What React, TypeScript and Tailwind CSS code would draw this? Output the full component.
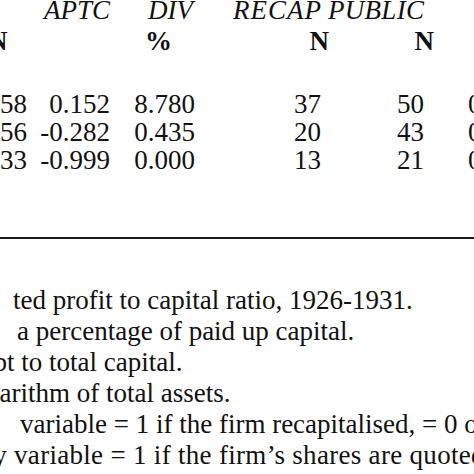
import React from 'react'

const rows = [
  { a: '58', aptc: '0.152', div: '8.780', recap: '37', pub: '50', last: '0.412' },
  { a: '56', aptc: '-0.282', div: '0.435', recap: '20', pub: '43', last: '0.271' },
  { a: '33', aptc: '-0.999', div: '0.000', recap: '13', pub: '21', last: '0.000' },
]

export default function App() {
  return (
    <div
      className="w-[474px] h-[474px] overflow-hidden bg-white text-[#111] text-[27px]"
      style={{ fontFamily: '"Liberation Serif", "Times New Roman", serif' }}
    >
      {/* header: variable names */}
      <div className="flex whitespace-nowrap leading-[20px] italic">
        <div className="w-[110px] shrink-0 text-right">APTC</div>
        <div className="w-[83px] shrink-0 text-right">DIV</div>
        <div className="ml-[40px] shrink-0 tracking-[1px]">RECAP</div>
        <div className="ml-[6px] shrink-0 tracking-[0.3px]">PUBLIC</div>
      </div>

      {/* header: units */}
      <div className="flex whitespace-nowrap leading-[28px] mt-[7px] font-bold">
        <div className="-ml-[12px] w-[20px] shrink-0">N</div>
        <div className="ml-[137px] w-[24px] shrink-0 text-center">%</div>
        <div className="w-[160px] shrink-0 text-right">N</div>
        <div className="w-[105px] shrink-0 text-right">N</div>
      </div>

      {/* data */}
      <div className="mt-[35px]">
        {rows.map((r) => (
          <div key={r.a} className="flex whitespace-nowrap leading-[28px]">
            <div className="w-[27px] shrink-0 text-right">{r.a}</div>
            <div className="w-[83px] shrink-0 text-right">{r.aptc}</div>
            <div className="w-[85px] shrink-0 text-right">{r.div}</div>
            <div className="w-[126px] shrink-0 text-right">{r.recap}</div>
            <div className="w-[103px] shrink-0 text-right">{r.pub}</div>
            <div className="ml-[44px] shrink-0">{r.last}</div>
          </div>
        ))}
      </div>

      <div className="mt-[63px] h-[2px] bg-[#1a1a1a]" />

      {/* notes */}
      <div className="mt-[46px] leading-[31px] whitespace-nowrap">
        <div className="pl-[13px]">ted profit to capital ratio, 1926-1931.</div>
        <div className="pl-[17px]">a percentage of paid up capital.</div>
        <div className="-ml-[32px]">debt to total capital.</div>
        <div className="-ml-[35px]">logarithm of total assets.</div>
        <div className="pl-[20px]">variable = 1 if the firm recapitalised, = 0 otherwise.</div>
        <div className="-ml-[83px] tracking-[0.3px]">Dummy variable = 1 if the firm’s shares are quoted on an exchange.</div>
      </div>
    </div>
  )
}
